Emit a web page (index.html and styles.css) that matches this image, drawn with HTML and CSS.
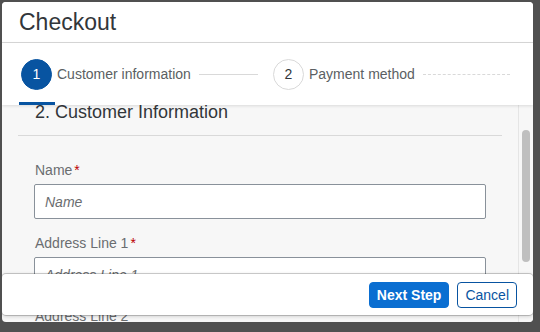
FILE: index.html
```html
<!DOCTYPE html>
<html>
<head>
<meta charset="utf-8">
<link rel="stylesheet" href="styles.css">
</head>
<body>
<div class="dialog">
  <div class="header">Checkout</div>
  <div class="wizard">
    <div class="step current">
      <span class="num">1</span>
      <span class="title">Customer information</span>
      <span class="line"></span>
      <span class="underline"></span>
    </div>
    <div class="step">
      <span class="num">2</span>
      <span class="title">Payment method</span>
      <span class="line dashed"></span>
    </div>
  </div>
  <div class="content">
    <div class="main">
      <div class="inner">
        <h2 class="section-title">2. Customer Information</h2>
        <div class="form">
          <div class="field">
            <label class="label">Name<span class="req">*</span></label>
            <div class="input"><span class="ph">Name</span></div>
          </div>
          <div class="field">
            <label class="label">Address Line 1<span class="req">*</span></label>
            <div class="input"><span class="ph">Address Line 1</span></div>
          </div>
          <div class="field">
            <label class="label">Address Line 2</label>
            <div class="input"><span class="ph">Address Line 2</span></div>
          </div>
        </div>
      </div>
    </div>
    <div class="scrollbar"><div class="thumb"></div></div>
  </div>
  <div class="footer">
    <button class="btn primary">Next Step</button>
    <button class="btn ghost">Cancel</button>
  </div>
</div>
</body>
</html>
```
FILE: styles.css
```css
* { box-sizing: border-box; }
html, body { margin: 0; padding: 0; }
body {
  background: #505050;
  width: 540px;
  height: 332px;
  overflow: hidden;
  padding: 2px 7px 10px 2px;
  font-family: "Liberation Sans", Arial, sans-serif;
}
.dialog {
  position: relative;
  width: 531px;
  height: 320px;
  background: #f7f7f7;
  border-radius: 4px;
  overflow: hidden;
  display: flex;
  flex-direction: column;
}
.header {
  height: 41px;
  flex: none;
  background: #fff;
  border-bottom: 1px solid #d9d9d9;
  padding-left: 17px;
  font-size: 23px;
  line-height: 40px;
  color: #32363a;
}
.wizard {
  position: relative;
  z-index: 2;
  height: 62px;
  flex: none;
  background: #fff;
  display: flex;
  align-items: center;
  padding: 0 10px 0 17px;
  box-shadow: 0 1px 3px rgba(0,0,0,0.12);
}
.step {
  position: relative;
  flex: 1;
  height: 100%;
  display: flex;
  align-items: center;
  padding-left: 2px;
}
.num {
  flex: none;
  width: 31px;
  height: 31px;
  border-radius: 50%;
  border: 1px solid #d9d9d9;
  background: #fff;
  color: #32363a;
  font-size: 14px;
  display: flex;
  align-items: center;
  justify-content: center;
}
.current .num {
  background: #0854a1;
  border-color: #0854a1;
  color: #fff;
}
.title {
  margin-left: 5px;
  font-size: 14px;
  color: #5b5f63;
  white-space: nowrap;
}
.line {
  flex: 1;
  height: 0;
  border-top: 1px solid #d9d9d9;
  margin: 0 13px 0 8px;
}
.line.dashed {
  border-top: 1px dashed #d9d9d9;
}
.underline {
  position: absolute;
  left: 0;
  bottom: 0;
  width: 36px;
  height: 3px;
  background: #0854a1;
}
.content {
  flex: 1;
  display: flex;
  min-height: 0;
}
.main {
  flex: 1;
  overflow: hidden;
}
.inner {
  margin-top: -4px;
}
.section-title {
  margin: 0 16px 0 16px;
  padding: 0 17px 12px;
  border-bottom: 1px solid #d9d9d9;
  font-size: 18px;
  line-height: 22px;
  font-weight: normal;
  color: #32363a;
}
.form {
  padding: 25px 32px 0 32px;
}
.field {
  margin-bottom: 15px;
}
.label {
  display: block;
  padding-left: 1px;
  font-size: 14px;
  line-height: 18px;
  color: #6a6d70;
  margin-bottom: 5px;
}
.req {
  color: #bb0000;
  margin-left: 2px;
}
.input {
  height: 35px;
  background: #fff;
  border: 1px solid #89919a;
  border-radius: 2px;
  padding-left: 10px;
  display: flex;
  align-items: center;
}
.ph {
  font-size: 14px;
  font-style: italic;
  color: #6a6d70;
}
.scrollbar {
  flex: none;
  width: 15px;
  border-left: 1px solid #e5e5e5;
  background: #f7f7f7;
  padding: 25px 0 0 3px;
}
.thumb {
  width: 8px;
  height: 132px;
  border-radius: 4px;
  background: #bfbfbf;
}
.footer {
  position: absolute;
  z-index: 3;
  left: 0;
  right: 0;
  bottom: 7px;
  height: 41px;
  background: #fff;
  border-radius: 4px;
  box-shadow: 0 0 0 1px rgba(0,0,0,0.18), 0 1px 4px rgba(0,0,0,0.2);
  display: flex;
  align-items: center;
  justify-content: flex-end;
  gap: 8px;
  padding-right: 16px;
}
.btn {
  height: 26px;
  border-radius: 4px;
  font-family: "Liberation Sans", Arial, sans-serif;
  font-size: 14px;
  padding: 0 7px;
  margin: 0;
  cursor: pointer;
}
.primary {
  background: #0a6ed1;
  border: 1px solid #0a6ed1;
  color: #fff;
  font-weight: bold;
}
.ghost {
  background: #fff;
  border: 1px solid #0854a1;
  color: #0854a1;
}
```
